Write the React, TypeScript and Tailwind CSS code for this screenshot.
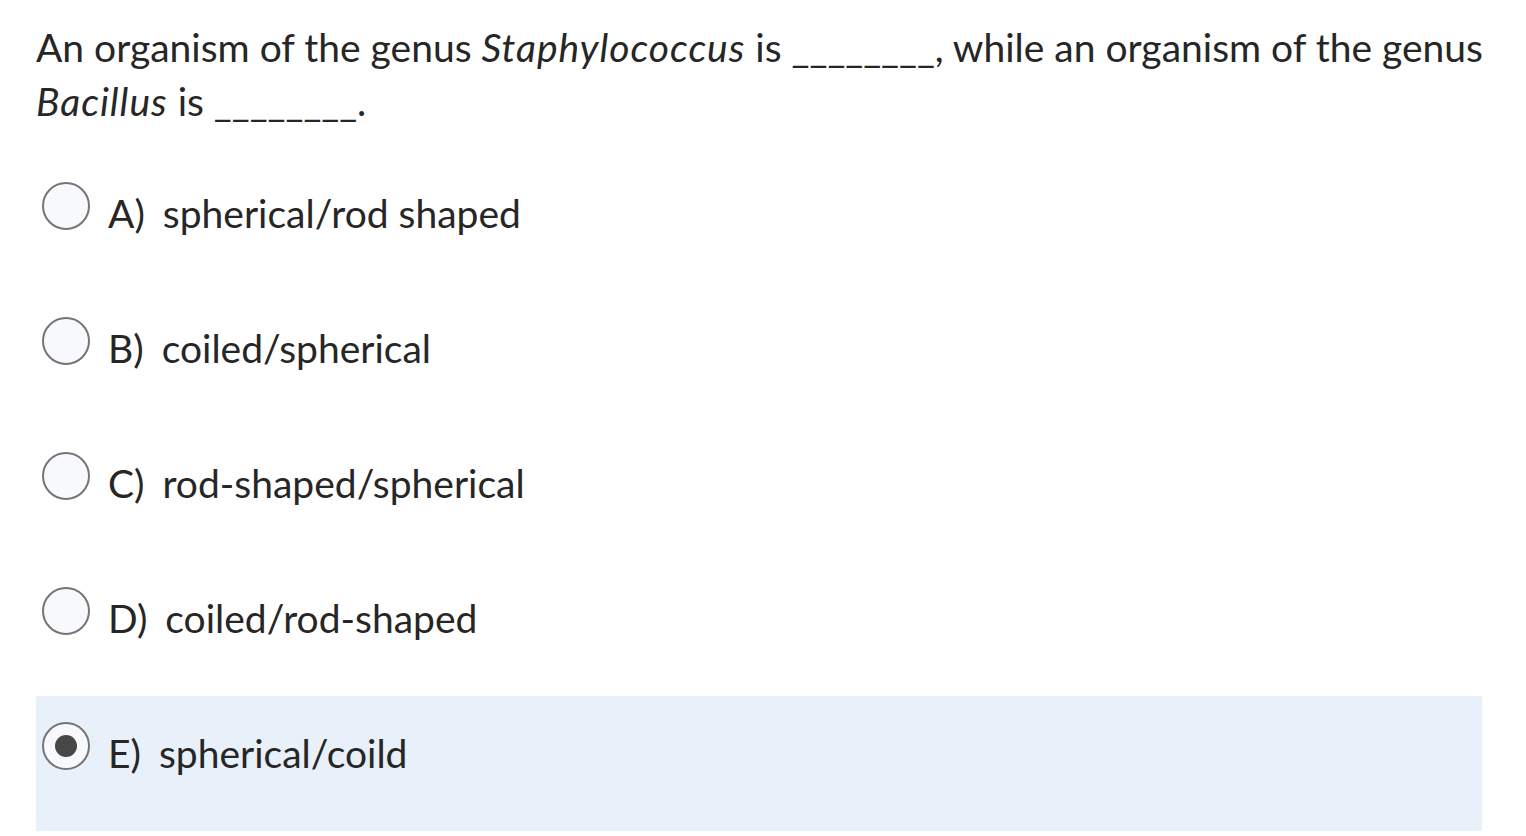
import React from "react";

const options = [
  { label: "A)", text: "spherical/rod shaped", selected: false },
  { label: "B)", text: "coiled/spherical", selected: false },
  { label: "C)", text: "rod-shaped/spherical", selected: false },
  { label: "D)", text: "coiled/rod-shaped", selected: false },
  { label: "E)", text: "spherical/coild", selected: true },
];

function Radio({ selected }: { selected: boolean }) {
  return (
    <div className="w-[48px] h-[48px] shrink-0 rounded-full border-2 border-[#757575] bg-[#f8f9fd] flex items-center justify-center">
      {selected && <div className="w-[22px] h-[22px] rounded-full bg-[#474747]" />}
    </div>
  );
}

export default function App() {
  return (
    <div
      className="w-[1526px] h-[836px] bg-white text-[#262626] overflow-hidden"
      style={{ fontFamily: "Lato, 'Noto Sans', sans-serif" }}
    >
      <div className="pl-[36px] pr-[40px] pt-[20px]">
        <p className="text-[39px] leading-[54px]">
          An organism of the genus <i className="tracking-[1px]">Staphylococcus</i> is ________, while an organism of the genus{" "}
          <i className="tracking-[1px]">Bacillus</i> is ________.
        </p>
      </div>
      <div className="mt-[28px] ml-[36px] mr-[44px]">
        {options.map((o) => (
          <div
            key={o.label}
            className={`h-[135px] flex items-start gap-[18px] pl-[6px] pt-[26px] ${o.selected ? "bg-[#e8f0fa]" : ""}`}
          >
            <Radio selected={o.selected} />
            <div className="text-[39px] leading-[54px] flex gap-[18px] mt-[4px]">
              <span>{o.label}</span>
              <span>{o.text}</span>
            </div>
          </div>
        ))}
      </div>
    </div>
  );
}
